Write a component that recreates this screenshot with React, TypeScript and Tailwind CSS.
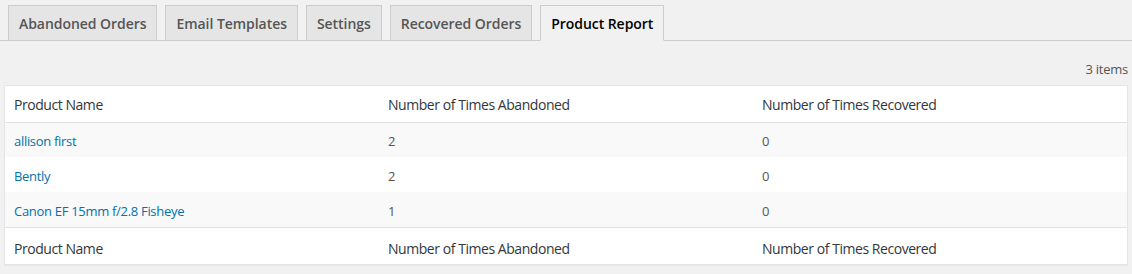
const tabs = ["Abandoned Orders", "Email Templates", "Settings", "Recovered Orders", "Product Report"];

const rows = [
    { name: "allison first", abandoned: 2, recovered: 0 },
    { name: "Bently", abandoned: 2, recovered: 0 },
    { name: "Canon EF 15mm f/2.8 Fisheye", abandoned: 1, recovered: 0 },
];

const columns = ["Product Name", "Number of Times Abandoned", "Number of Times Recovered"];

export default function App() {
    return (
        <div className="h-[274px] w-full bg-[#f1f1f1] font-['Open_Sans',sans-serif] text-[#444]">
            <div className="flex border-b border-[#ccc] pl-[8px] pt-[5px]">
                {tabs.map((tab) => {
                    const active = tab === "Product Report";
                    return (
                        <a
                            key={tab}
                            href="#"
                            className={
                                active
                                    ? "-mb-px mr-[8px] border border-[#ccc] border-b-[#f1f1f1] bg-[#f1f1f1] px-[10px] pt-[6px] pb-[4px] text-[14px] leading-[24px] font-semibold tracking-[-0.05px] text-black"
                                    : "-mb-px mr-[8px] border border-[#ccc] bg-[#e5e5e5] px-[10px] pt-[6px] pb-[4px] text-[14px] leading-[24px] font-semibold tracking-[-0.05px] text-[#555]"
                            }
                        >
                            {tab}
                        </a>
                    );
                })}
            </div>
            <div className="flex h-[44px] items-center justify-end pr-[4px] pt-[14px] text-[13px] tracking-[-0.25px] text-[#555]">
                3 items
            </div>
            <div className="px-[4px]">
                <table className="w-full border-separate border-spacing-0 border border-[#e5e5e5] bg-white shadow-[0_1px_1px_rgba(0,0,0,0.04)]">
                    <thead>
                        <tr className="text-[14px] tracking-[-0.45px] text-[#32373c]">
                            {columns.map((c) => (
                                <th key={c} className="h-[36px] w-1/3 px-[9px] text-left font-normal">{c}</th>
                            ))}
                        </tr>
                    </thead>
                    <tbody className="text-[13px] tracking-[-0.3px]">
                        {rows.map((row, i) => {
                            const cell = `h-[35px] px-[9px] pt-[4px] ${i === 0 ? "border-t border-[#e1e1e1]" : ""}`;
                            return (
                                <tr key={row.name} className={i % 2 === 0 ? "bg-[#f9f9f9]" : "bg-white"}>
                                    <td className={cell}>
                                        <a href="#" className="text-[#0073aa]">{row.name}</a>
                                    </td>
                                    <td className={`${cell} text-[#555]`}>{row.abandoned}</td>
                                    <td className={`${cell} text-[#555]`}>{row.recovered}</td>
                                </tr>
                            );
                        })}
                    </tbody>
                    <tfoot>
                        <tr className="text-[14px] tracking-[-0.45px] text-[#32373c]">
                            {columns.map((c) => (
                                <th key={c} className="h-[37px] border-t border-[#e1e1e1] px-[9px] pt-[5px] text-left font-normal">{c}</th>
                            ))}
                        </tr>
                    </tfoot>
                </table>
            </div>
        </div>
    );
}
